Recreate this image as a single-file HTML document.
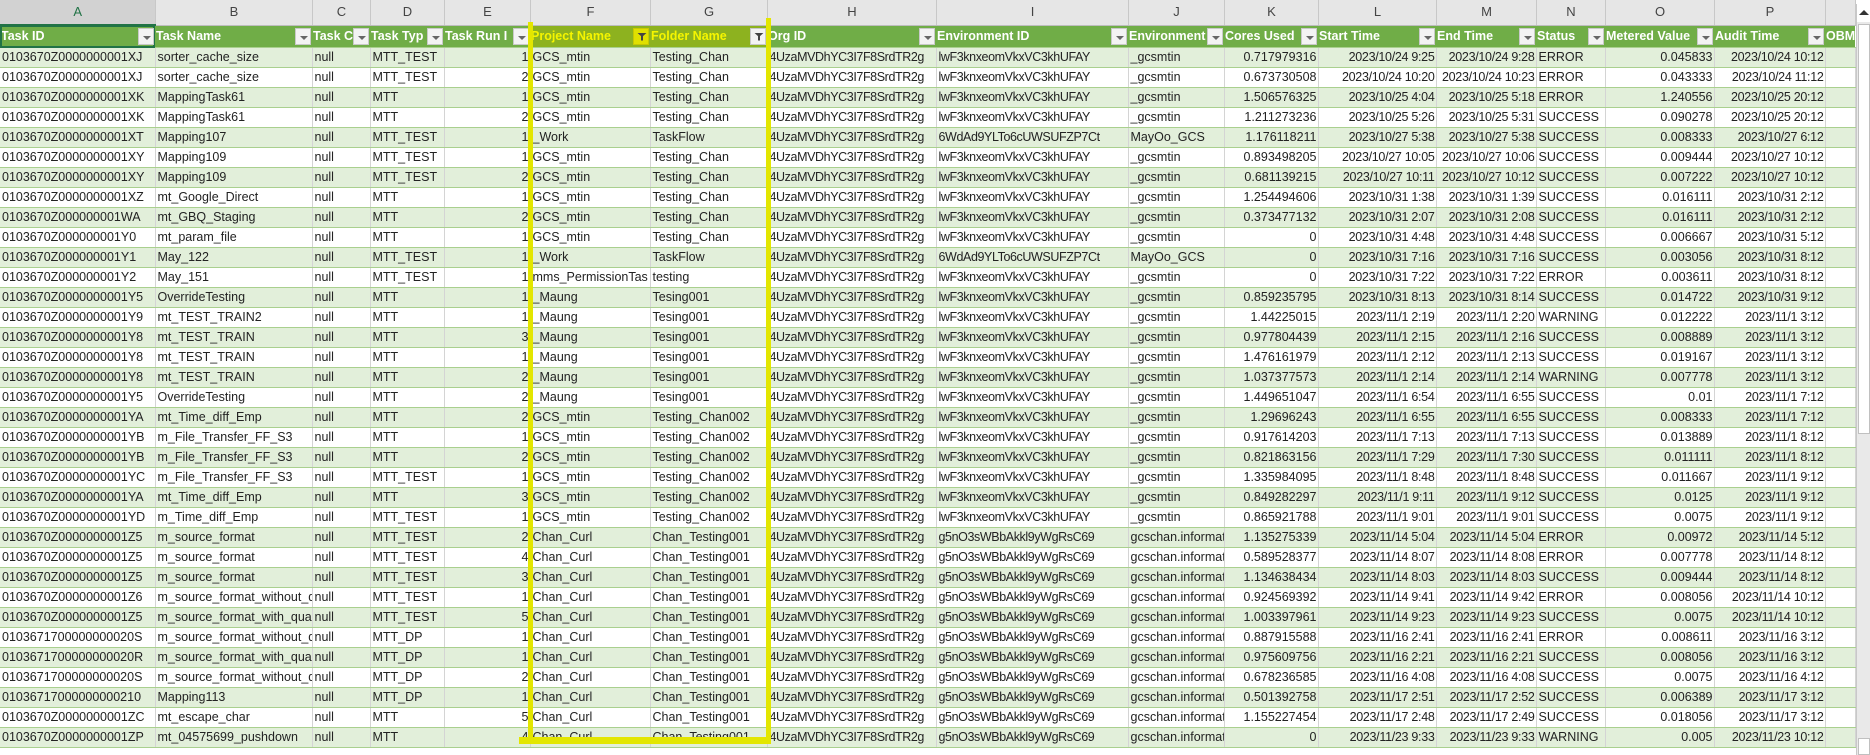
<!DOCTYPE html>
<html><head><meta charset="utf-8">
<style>
html,body{margin:0;padding:0;background:#fff;width:1870px;height:755px;overflow:hidden}
body{font-family:"Liberation Sans","Noto Sans CJK JP",sans-serif;font-size:12.5px;color:#222;position:relative}
table{border-collapse:collapse;table-layout:fixed;position:absolute;left:0;top:0;width:1855px}
td{white-space:nowrap;overflow:hidden;padding:0 1px 0 2px;height:19px;line-height:19px;border-right:1px solid #d4d4d4;border-bottom:1px solid #a9d08e}
tr.d td:nth-child(8),tr.d td:nth-child(9){letter-spacing:-0.4px}
tr.d td:nth-child(12),tr.d td:nth-child(13),tr.d td:nth-child(16){letter-spacing:-0.3px}
tr.L td{height:22px;line-height:24px;background:#e6e6e6;color:#444;text-align:center;border-right:1px solid #c8c8c8;border-bottom:1px solid #bdbdbd;font-size:13px}
tr.L td.sel{background:#d2d2d2;color:#217346;border-bottom:2px solid #217346}
tr.H td{height:21px;line-height:21px;background:#70ad47;color:#fff;font-weight:bold;position:relative;border-right:none;border-bottom:1px solid #a9d08e;padding-left:1px;font-size:12.5px}
tr.H td.f{background:#8db21f;color:#f5f500}
tr.H td.a{outline:2px solid #217346;outline-offset:-2px}
.dd{position:absolute;right:1px;top:2px;width:16px;height:17px;background:#f3f3f3;border:1px solid #c9c9c9;box-sizing:border-box}
.dd:after{content:"";position:absolute;left:4px;top:7px;border-left:4px solid transparent;border-right:4px solid transparent;border-top:4px solid #666}
.dd.fy{background:#e0e000;border-color:#c8c800}
.dd.fy:after,.dd.fw:after{border:none;left:3px;top:4px;width:10px;height:8px;background:#444;clip-path:polygon(0 0,100% 0,60% 45%,60% 100%,40% 100%,40% 45%)}
tr.d:nth-child(odd) td{background:#e2efda}
tr.d:nth-child(even) td{background:#fff}
.r{text-align:right}
.y{position:absolute;background:#e3e600}
</style></head><body>
<table>
<colgroup>
<col style="width:155px"><col style="width:157px"><col style="width:58px"><col style="width:74px"><col style="width:86px"><col style="width:120px"><col style="width:117px"><col style="width:169px"><col style="width:192px"><col style="width:96px"><col style="width:94px"><col style="width:118px"><col style="width:100px"><col style="width:69px"><col style="width:109px"><col style="width:111px"><col style="width:30px">
</colgroup>
<tr class="L"><td class="sel">A</td><td>B</td><td>C</td><td>D</td><td>E</td><td>F</td><td>G</td><td>H</td><td>I</td><td>J</td><td>K</td><td>L</td><td>M</td><td>N</td><td>O</td><td>P</td><td></td></tr>
<tr class="H"><td class="a">Task ID<span class="dd"></span></td><td>Task Name<span class="dd"></span></td><td>Task C<span class="dd"></span></td><td>Task Typ<span class="dd"></span></td><td>Task Run I<span class="dd"></span></td><td class="f">Project Name<span class="dd fy"></span></td><td class="f">Folder Name<span class="dd fw"></span></td><td>Org ID<span class="dd"></span></td><td>Environment ID<span class="dd"></span></td><td>Environment<span class="dd"></span></td><td>Cores Used<span class="dd"></span></td><td>Start Time<span class="dd"></span></td><td>End Time<span class="dd"></span></td><td>Status<span class="dd"></span></td><td>Metered Value<span class="dd"></span></td><td>Audit Time<span class="dd"></span></td><td>OBM</td></tr>
<tr class="d"><td>0103670Z0000000001XJ</td><td>sorter_cache_size</td><td>null</td><td>MTT_TEST</td><td class="r">1</td><td>GCS_mtin</td><td>Testing_Chan</td><td>4UzaMVDhYC3I7F8SrdTR2g</td><td>lwF3knxeomVkxVC3khUFAY</td><td>_gcsmtin</td><td class="r">0.717979316</td><td class="r">2023/10/24 9:25</td><td class="r">2023/10/24 9:28</td><td>ERROR</td><td class="r">0.045833</td><td class="r">2023/10/24 10:12</td><td></td></tr>
<tr class="d"><td>0103670Z0000000001XJ</td><td>sorter_cache_size</td><td>null</td><td>MTT_TEST</td><td class="r">2</td><td>GCS_mtin</td><td>Testing_Chan</td><td>4UzaMVDhYC3I7F8SrdTR2g</td><td>lwF3knxeomVkxVC3khUFAY</td><td>_gcsmtin</td><td class="r">0.673730508</td><td class="r">2023/10/24 10:20</td><td class="r">2023/10/24 10:23</td><td>ERROR</td><td class="r">0.043333</td><td class="r">2023/10/24 11:12</td><td></td></tr>
<tr class="d"><td>0103670Z0000000001XK</td><td>MappingTask61</td><td>null</td><td>MTT</td><td class="r">1</td><td>GCS_mtin</td><td>Testing_Chan</td><td>4UzaMVDhYC3I7F8SrdTR2g</td><td>lwF3knxeomVkxVC3khUFAY</td><td>_gcsmtin</td><td class="r">1.506576325</td><td class="r">2023/10/25 4:04</td><td class="r">2023/10/25 5:18</td><td>ERROR</td><td class="r">1.240556</td><td class="r">2023/10/25 20:12</td><td></td></tr>
<tr class="d"><td>0103670Z0000000001XK</td><td>MappingTask61</td><td>null</td><td>MTT</td><td class="r">2</td><td>GCS_mtin</td><td>Testing_Chan</td><td>4UzaMVDhYC3I7F8SrdTR2g</td><td>lwF3knxeomVkxVC3khUFAY</td><td>_gcsmtin</td><td class="r">1.211273236</td><td class="r">2023/10/25 5:26</td><td class="r">2023/10/25 5:31</td><td>SUCCESS</td><td class="r">0.090278</td><td class="r">2023/10/25 20:12</td><td></td></tr>
<tr class="d"><td>0103670Z0000000001XT</td><td>Mapping107</td><td>null</td><td>MTT_TEST</td><td class="r">1</td><td>_Work</td><td>TaskFlow</td><td>4UzaMVDhYC3I7F8SrdTR2g</td><td>6WdAd9YLTo6cUWSUFZP7Ct</td><td>MayOo_GCS</td><td class="r">1.176118211</td><td class="r">2023/10/27 5:38</td><td class="r">2023/10/27 5:38</td><td>SUCCESS</td><td class="r">0.008333</td><td class="r">2023/10/27 6:12</td><td></td></tr>
<tr class="d"><td>0103670Z0000000001XY</td><td>Mapping109</td><td>null</td><td>MTT_TEST</td><td class="r">1</td><td>GCS_mtin</td><td>Testing_Chan</td><td>4UzaMVDhYC3I7F8SrdTR2g</td><td>lwF3knxeomVkxVC3khUFAY</td><td>_gcsmtin</td><td class="r">0.893498205</td><td class="r">2023/10/27 10:05</td><td class="r">2023/10/27 10:06</td><td>SUCCESS</td><td class="r">0.009444</td><td class="r">2023/10/27 10:12</td><td></td></tr>
<tr class="d"><td>0103670Z0000000001XY</td><td>Mapping109</td><td>null</td><td>MTT_TEST</td><td class="r">2</td><td>GCS_mtin</td><td>Testing_Chan</td><td>4UzaMVDhYC3I7F8SrdTR2g</td><td>lwF3knxeomVkxVC3khUFAY</td><td>_gcsmtin</td><td class="r">0.681139215</td><td class="r">2023/10/27 10:11</td><td class="r">2023/10/27 10:12</td><td>SUCCESS</td><td class="r">0.007222</td><td class="r">2023/10/27 10:12</td><td></td></tr>
<tr class="d"><td>0103670Z0000000001XZ</td><td>mt_Google_Direct</td><td>null</td><td>MTT</td><td class="r">1</td><td>GCS_mtin</td><td>Testing_Chan</td><td>4UzaMVDhYC3I7F8SrdTR2g</td><td>lwF3knxeomVkxVC3khUFAY</td><td>_gcsmtin</td><td class="r">1.254494606</td><td class="r">2023/10/31 1:38</td><td class="r">2023/10/31 1:39</td><td>SUCCESS</td><td class="r">0.016111</td><td class="r">2023/10/31 2:12</td><td></td></tr>
<tr class="d"><td>0103670Z000000001WA</td><td>mt_GBQ_Staging</td><td>null</td><td>MTT</td><td class="r">2</td><td>GCS_mtin</td><td>Testing_Chan</td><td>4UzaMVDhYC3I7F8SrdTR2g</td><td>lwF3knxeomVkxVC3khUFAY</td><td>_gcsmtin</td><td class="r">0.373477132</td><td class="r">2023/10/31 2:07</td><td class="r">2023/10/31 2:08</td><td>SUCCESS</td><td class="r">0.016111</td><td class="r">2023/10/31 2:12</td><td></td></tr>
<tr class="d"><td>0103670Z000000001Y0</td><td>mt_param_file</td><td>null</td><td>MTT</td><td class="r">1</td><td>GCS_mtin</td><td>Testing_Chan</td><td>4UzaMVDhYC3I7F8SrdTR2g</td><td>lwF3knxeomVkxVC3khUFAY</td><td>_gcsmtin</td><td class="r">0</td><td class="r">2023/10/31 4:48</td><td class="r">2023/10/31 4:48</td><td>SUCCESS</td><td class="r">0.006667</td><td class="r">2023/10/31 5:12</td><td></td></tr>
<tr class="d"><td>0103670Z000000001Y1</td><td>May_122</td><td>null</td><td>MTT_TEST</td><td class="r">1</td><td>_Work</td><td>TaskFlow</td><td>4UzaMVDhYC3I7F8SrdTR2g</td><td>6WdAd9YLTo6cUWSUFZP7Ct</td><td>MayOo_GCS</td><td class="r">0</td><td class="r">2023/10/31 7:16</td><td class="r">2023/10/31 7:16</td><td>SUCCESS</td><td class="r">0.003056</td><td class="r">2023/10/31 8:12</td><td></td></tr>
<tr class="d"><td>0103670Z000000001Y2</td><td>May_151</td><td>null</td><td>MTT_TEST</td><td class="r">1</td><td>mms_PermissionTas</td><td>testing</td><td>4UzaMVDhYC3I7F8SrdTR2g</td><td>lwF3knxeomVkxVC3khUFAY</td><td>_gcsmtin</td><td class="r">0</td><td class="r">2023/10/31 7:22</td><td class="r">2023/10/31 7:22</td><td>ERROR</td><td class="r">0.003611</td><td class="r">2023/10/31 8:12</td><td></td></tr>
<tr class="d"><td>0103670Z0000000001Y5</td><td>OverrideTesting</td><td>null</td><td>MTT</td><td class="r">1</td><td>_Maung</td><td>Tesing001</td><td>4UzaMVDhYC3I7F8SrdTR2g</td><td>lwF3knxeomVkxVC3khUFAY</td><td>_gcsmtin</td><td class="r">0.859235795</td><td class="r">2023/10/31 8:13</td><td class="r">2023/10/31 8:14</td><td>SUCCESS</td><td class="r">0.014722</td><td class="r">2023/10/31 9:12</td><td></td></tr>
<tr class="d"><td>0103670Z0000000001Y9</td><td>mt_TEST_TRAIN2</td><td>null</td><td>MTT</td><td class="r">1</td><td>_Maung</td><td>Tesing001</td><td>4UzaMVDhYC3I7F8SrdTR2g</td><td>lwF3knxeomVkxVC3khUFAY</td><td>_gcsmtin</td><td class="r">1.44225015</td><td class="r">2023/11/1 2:19</td><td class="r">2023/11/1 2:20</td><td>WARNING</td><td class="r">0.012222</td><td class="r">2023/11/1 3:12</td><td></td></tr>
<tr class="d"><td>0103670Z0000000001Y8</td><td>mt_TEST_TRAIN</td><td>null</td><td>MTT</td><td class="r">3</td><td>_Maung</td><td>Tesing001</td><td>4UzaMVDhYC3I7F8SrdTR2g</td><td>lwF3knxeomVkxVC3khUFAY</td><td>_gcsmtin</td><td class="r">0.977804439</td><td class="r">2023/11/1 2:15</td><td class="r">2023/11/1 2:16</td><td>SUCCESS</td><td class="r">0.008889</td><td class="r">2023/11/1 3:12</td><td></td></tr>
<tr class="d"><td>0103670Z0000000001Y8</td><td>mt_TEST_TRAIN</td><td>null</td><td>MTT</td><td class="r">1</td><td>_Maung</td><td>Tesing001</td><td>4UzaMVDhYC3I7F8SrdTR2g</td><td>lwF3knxeomVkxVC3khUFAY</td><td>_gcsmtin</td><td class="r">1.476161979</td><td class="r">2023/11/1 2:12</td><td class="r">2023/11/1 2:13</td><td>SUCCESS</td><td class="r">0.019167</td><td class="r">2023/11/1 3:12</td><td></td></tr>
<tr class="d"><td>0103670Z0000000001Y8</td><td>mt_TEST_TRAIN</td><td>null</td><td>MTT</td><td class="r">2</td><td>_Maung</td><td>Tesing001</td><td>4UzaMVDhYC3I7F8SrdTR2g</td><td>lwF3knxeomVkxVC3khUFAY</td><td>_gcsmtin</td><td class="r">1.037377573</td><td class="r">2023/11/1 2:14</td><td class="r">2023/11/1 2:14</td><td>WARNING</td><td class="r">0.007778</td><td class="r">2023/11/1 3:12</td><td></td></tr>
<tr class="d"><td>0103670Z0000000001Y5</td><td>OverrideTesting</td><td>null</td><td>MTT</td><td class="r">2</td><td>_Maung</td><td>Tesing001</td><td>4UzaMVDhYC3I7F8SrdTR2g</td><td>lwF3knxeomVkxVC3khUFAY</td><td>_gcsmtin</td><td class="r">1.449651047</td><td class="r">2023/11/1 6:54</td><td class="r">2023/11/1 6:55</td><td>SUCCESS</td><td class="r">0.01</td><td class="r">2023/11/1 7:12</td><td></td></tr>
<tr class="d"><td>0103670Z0000000001YA</td><td>mt_Time_diff_Emp</td><td>null</td><td>MTT</td><td class="r">2</td><td>GCS_mtin</td><td>Testing_Chan002</td><td>4UzaMVDhYC3I7F8SrdTR2g</td><td>lwF3knxeomVkxVC3khUFAY</td><td>_gcsmtin</td><td class="r">1.29696243</td><td class="r">2023/11/1 6:55</td><td class="r">2023/11/1 6:55</td><td>SUCCESS</td><td class="r">0.008333</td><td class="r">2023/11/1 7:12</td><td></td></tr>
<tr class="d"><td>0103670Z0000000001YB</td><td>m_File_Transfer_FF_S3</td><td>null</td><td>MTT</td><td class="r">1</td><td>GCS_mtin</td><td>Testing_Chan002</td><td>4UzaMVDhYC3I7F8SrdTR2g</td><td>lwF3knxeomVkxVC3khUFAY</td><td>_gcsmtin</td><td class="r">0.917614203</td><td class="r">2023/11/1 7:13</td><td class="r">2023/11/1 7:13</td><td>SUCCESS</td><td class="r">0.013889</td><td class="r">2023/11/1 8:12</td><td></td></tr>
<tr class="d"><td>0103670Z0000000001YB</td><td>m_File_Transfer_FF_S3</td><td>null</td><td>MTT</td><td class="r">2</td><td>GCS_mtin</td><td>Testing_Chan002</td><td>4UzaMVDhYC3I7F8SrdTR2g</td><td>lwF3knxeomVkxVC3khUFAY</td><td>_gcsmtin</td><td class="r">0.821863156</td><td class="r">2023/11/1 7:29</td><td class="r">2023/11/1 7:30</td><td>SUCCESS</td><td class="r">0.011111</td><td class="r">2023/11/1 8:12</td><td></td></tr>
<tr class="d"><td>0103670Z0000000001YC</td><td>m_File_Transfer_FF_S3</td><td>null</td><td>MTT_TEST</td><td class="r">1</td><td>GCS_mtin</td><td>Testing_Chan002</td><td>4UzaMVDhYC3I7F8SrdTR2g</td><td>lwF3knxeomVkxVC3khUFAY</td><td>_gcsmtin</td><td class="r">1.335984095</td><td class="r">2023/11/1 8:48</td><td class="r">2023/11/1 8:48</td><td>SUCCESS</td><td class="r">0.011667</td><td class="r">2023/11/1 9:12</td><td></td></tr>
<tr class="d"><td>0103670Z0000000001YA</td><td>mt_Time_diff_Emp</td><td>null</td><td>MTT</td><td class="r">3</td><td>GCS_mtin</td><td>Testing_Chan002</td><td>4UzaMVDhYC3I7F8SrdTR2g</td><td>lwF3knxeomVkxVC3khUFAY</td><td>_gcsmtin</td><td class="r">0.849282297</td><td class="r">2023/11/1 9:11</td><td class="r">2023/11/1 9:12</td><td>SUCCESS</td><td class="r">0.0125</td><td class="r">2023/11/1 9:12</td><td></td></tr>
<tr class="d"><td>0103670Z0000000001YD</td><td>m_Time_diff_Emp</td><td>null</td><td>MTT_TEST</td><td class="r">1</td><td>GCS_mtin</td><td>Testing_Chan002</td><td>4UzaMVDhYC3I7F8SrdTR2g</td><td>lwF3knxeomVkxVC3khUFAY</td><td>_gcsmtin</td><td class="r">0.865921788</td><td class="r">2023/11/1 9:01</td><td class="r">2023/11/1 9:01</td><td>SUCCESS</td><td class="r">0.0075</td><td class="r">2023/11/1 9:12</td><td></td></tr>
<tr class="d"><td>0103670Z0000000001Z5</td><td>m_source_format</td><td>null</td><td>MTT_TEST</td><td class="r">2</td><td>Chan_Curl</td><td>Chan_Testing001</td><td>4UzaMVDhYC3I7F8SrdTR2g</td><td>g5nO3sWBbAkkl9yWgRsC69</td><td>gcschan.informat</td><td class="r">1.135275339</td><td class="r">2023/11/14 5:04</td><td class="r">2023/11/14 5:04</td><td>ERROR</td><td class="r">0.00972</td><td class="r">2023/11/14 5:12</td><td></td></tr>
<tr class="d"><td>0103670Z0000000001Z5</td><td>m_source_format</td><td>null</td><td>MTT_TEST</td><td class="r">4</td><td>Chan_Curl</td><td>Chan_Testing001</td><td>4UzaMVDhYC3I7F8SrdTR2g</td><td>g5nO3sWBbAkkl9yWgRsC69</td><td>gcschan.informat</td><td class="r">0.589528377</td><td class="r">2023/11/14 8:07</td><td class="r">2023/11/14 8:08</td><td>ERROR</td><td class="r">0.007778</td><td class="r">2023/11/14 8:12</td><td></td></tr>
<tr class="d"><td>0103670Z0000000001Z5</td><td>m_source_format</td><td>null</td><td>MTT_TEST</td><td class="r">3</td><td>Chan_Curl</td><td>Chan_Testing001</td><td>4UzaMVDhYC3I7F8SrdTR2g</td><td>g5nO3sWBbAkkl9yWgRsC69</td><td>gcschan.informat</td><td class="r">1.134638434</td><td class="r">2023/11/14 8:03</td><td class="r">2023/11/14 8:03</td><td>SUCCESS</td><td class="r">0.009444</td><td class="r">2023/11/14 8:12</td><td></td></tr>
<tr class="d"><td>0103670Z0000000001Z6</td><td>m_source_format_without_q</td><td>null</td><td>MTT_TEST</td><td class="r">1</td><td>Chan_Curl</td><td>Chan_Testing001</td><td>4UzaMVDhYC3I7F8SrdTR2g</td><td>g5nO3sWBbAkkl9yWgRsC69</td><td>gcschan.informat</td><td class="r">0.924569392</td><td class="r">2023/11/14 9:41</td><td class="r">2023/11/14 9:42</td><td>ERROR</td><td class="r">0.008056</td><td class="r">2023/11/14 10:12</td><td></td></tr>
<tr class="d"><td>0103670Z0000000001Z5</td><td>m_source_format_with_qual</td><td>null</td><td>MTT_TEST</td><td class="r">5</td><td>Chan_Curl</td><td>Chan_Testing001</td><td>4UzaMVDhYC3I7F8SrdTR2g</td><td>g5nO3sWBbAkkl9yWgRsC69</td><td>gcschan.informat</td><td class="r">1.003397961</td><td class="r">2023/11/14 9:23</td><td class="r">2023/11/14 9:23</td><td>SUCCESS</td><td class="r">0.0075</td><td class="r">2023/11/14 10:12</td><td></td></tr>
<tr class="d"><td>0103671700000000020S</td><td>m_source_format_without_q</td><td>null</td><td>MTT_DP</td><td class="r">1</td><td>Chan_Curl</td><td>Chan_Testing001</td><td>4UzaMVDhYC3I7F8SrdTR2g</td><td>g5nO3sWBbAkkl9yWgRsC69</td><td>gcschan.informat</td><td class="r">0.887915588</td><td class="r">2023/11/16 2:41</td><td class="r">2023/11/16 2:41</td><td>ERROR</td><td class="r">0.008611</td><td class="r">2023/11/16 3:12</td><td></td></tr>
<tr class="d"><td>0103671700000000020R</td><td>m_source_format_with_qual</td><td>null</td><td>MTT_DP</td><td class="r">1</td><td>Chan_Curl</td><td>Chan_Testing001</td><td>4UzaMVDhYC3I7F8SrdTR2g</td><td>g5nO3sWBbAkkl9yWgRsC69</td><td>gcschan.informat</td><td class="r">0.975609756</td><td class="r">2023/11/16 2:21</td><td class="r">2023/11/16 2:21</td><td>SUCCESS</td><td class="r">0.008056</td><td class="r">2023/11/16 3:12</td><td></td></tr>
<tr class="d"><td>0103671700000000020S</td><td>m_source_format_without_q</td><td>null</td><td>MTT_DP</td><td class="r">2</td><td>Chan_Curl</td><td>Chan_Testing001</td><td>4UzaMVDhYC3I7F8SrdTR2g</td><td>g5nO3sWBbAkkl9yWgRsC69</td><td>gcschan.informat</td><td class="r">0.678236585</td><td class="r">2023/11/16 4:08</td><td class="r">2023/11/16 4:08</td><td>SUCCESS</td><td class="r">0.0075</td><td class="r">2023/11/16 4:12</td><td></td></tr>
<tr class="d"><td>01036717000000000210</td><td>Mapping113</td><td>null</td><td>MTT_DP</td><td class="r">1</td><td>Chan_Curl</td><td>Chan_Testing001</td><td>4UzaMVDhYC3I7F8SrdTR2g</td><td>g5nO3sWBbAkkl9yWgRsC69</td><td>gcschan.informat</td><td class="r">0.501392758</td><td class="r">2023/11/17 2:51</td><td class="r">2023/11/17 2:52</td><td>SUCCESS</td><td class="r">0.006389</td><td class="r">2023/11/17 3:12</td><td></td></tr>
<tr class="d"><td>0103670Z0000000001ZC</td><td>mt_escape_char</td><td>null</td><td>MTT</td><td class="r">5</td><td>Chan_Curl</td><td>Chan_Testing001</td><td>4UzaMVDhYC3I7F8SrdTR2g</td><td>g5nO3sWBbAkkl9yWgRsC69</td><td>gcschan.informat</td><td class="r">1.155227454</td><td class="r">2023/11/17 2:48</td><td class="r">2023/11/17 2:49</td><td>SUCCESS</td><td class="r">0.018056</td><td class="r">2023/11/17 3:12</td><td></td></tr>
<tr class="d"><td>0103670Z0000000001ZP</td><td>mt_04575699_pushdown</td><td>null</td><td>MTT</td><td class="r">4</td><td>Chan_Curl</td><td>Chan_Testing001</td><td>4UzaMVDhYC3I7F8SrdTR2g</td><td>g5nO3sWBbAkkl9yWgRsC69</td><td>gcschan.informat</td><td class="r">0</td><td class="r">2023/11/23 9:33</td><td class="r">2023/11/23 9:33</td><td>WARNING</td><td class="r">0.005</td><td class="r">2023/11/23 10:12</td><td></td></tr>
</table>
<div class="y" style="left:528px;top:22px;width:5px;height:722px"></div>
<div class="y" style="left:766px;top:18px;width:5px;height:726px"></div>
<div class="y" style="left:519px;top:737px;width:252px;height:7px"></div>
<div style="position:absolute;left:1856px;top:4px;width:14px;height:751px;background:#e9e9e9;border-left:1px solid #c8c8c8"></div>
<div style="position:absolute;left:1857px;top:4px;width:13px;height:18px;background:#fff"></div>
<div style="position:absolute;left:1859px;top:10px;border-left:5px solid transparent;border-right:5px solid transparent;border-bottom:5px solid #333"></div>
<div style="position:absolute;left:1858px;top:24px;width:12px;height:410px;background:#fff;border:1px solid #c0c0c0;box-sizing:border-box"></div>
<div style="position:absolute;left:1858px;top:738px;width:12px;height:17px;background:#fff;border:1px solid #c0c0c0;box-sizing:border-box"></div>
</body></html>
